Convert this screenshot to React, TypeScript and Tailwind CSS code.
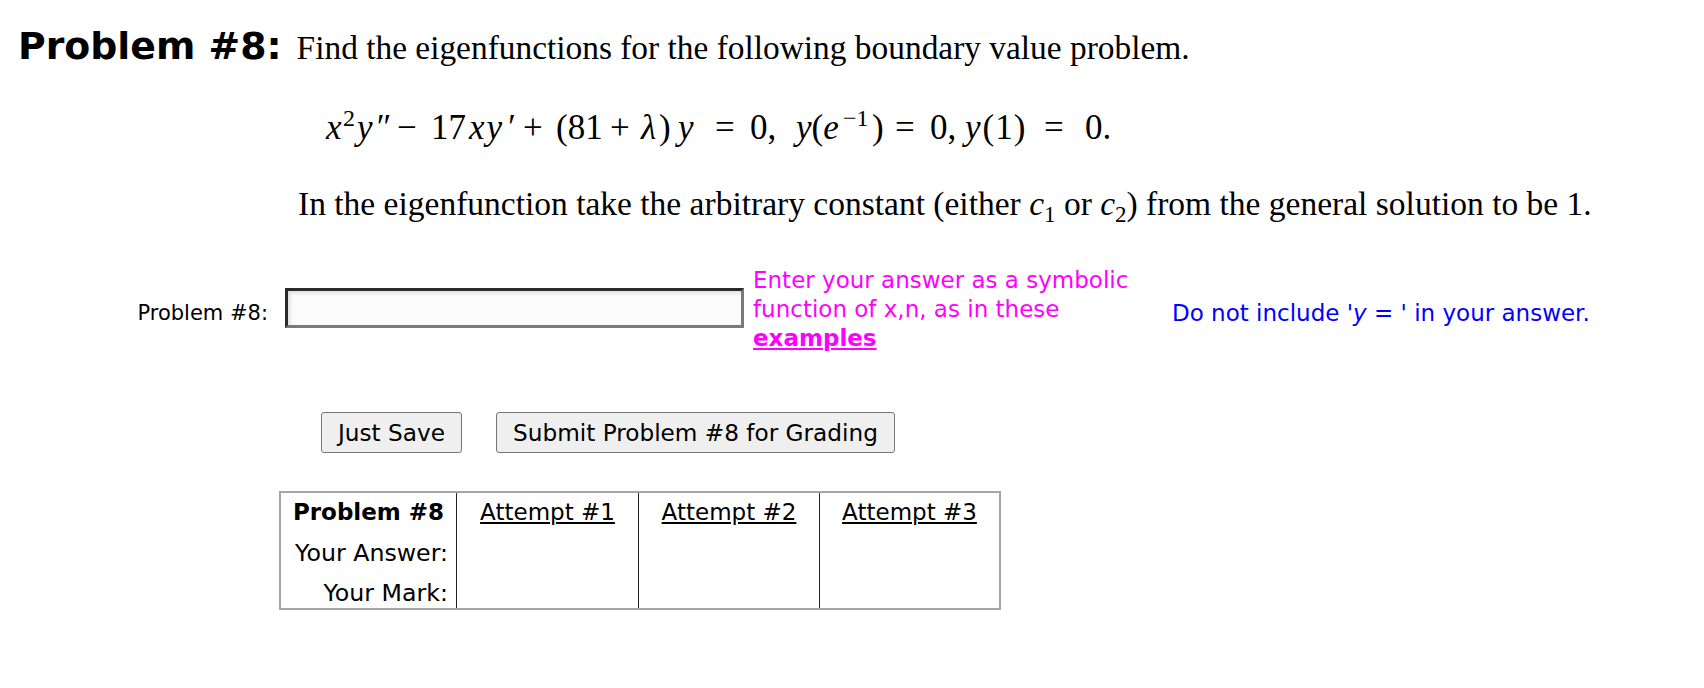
import React from "react";

const serif = "font-['Liberation_Serif',_'Times_New_Roman',_serif]";
const sans = "font-['DejaVu_Sans',_Verdana,_sans-serif]";

function I({ children }: { children: React.ReactNode }) {
  return <span className="italic">{children}</span>;
}

export default function App() {
  return (
    <div className="w-[1704px] h-[688px] bg-white text-black overflow-hidden">
      {/* Title */}
      <div className="flex items-baseline pl-[18px] pt-[24px]">
        <span className={`${sans} font-bold text-[37.8px] leading-[44px]`}>Problem #8:</span>
        <span className={`${serif} text-[33.4px] leading-[44px] ml-[15px]`}>
          Find the eigenfunctions for the following boundary value problem.
        </span>
      </div>

      {/* Equation */}
      <div className={`${serif} text-[35px] leading-[40px] pl-[326px] mt-[38px] whitespace-nowrap flex items-baseline`}>
        <span className="w-[17px] shrink-0"><I>x</I></span>
        <span className="w-[14px] shrink-0 relative top-[-13px] text-[24px] leading-none">2</span>
        <span className="w-[40px] shrink-0"><I>y<span className="ml-[2px]">″</span></I></span>
        <span className="w-[34px] shrink-0">−</span>
        <span className="w-[92px] shrink-0">
          17<I><span className="ml-[3px]">x</span><span className="ml-[2px]">y</span><span className="ml-[4px]">′</span></I>
        </span>
        <span className="w-[33px] shrink-0">+</span>
        <span className="w-[54px] shrink-0">(81</span>
        <span className="w-[31px] shrink-0">+</span>
        <span className="w-[18px] shrink-0"><I>λ</I></span>
        <span className="w-[19px] shrink-0">)</span>
        <span className="w-[37px] shrink-0"><I>y</I></span>
        <span className="w-[35px] shrink-0">=</span>
        <span className="w-[46px] shrink-0">0,</span>
        <span className="w-[47px] shrink-0"><I>y</I>(<I>e</I></span>
        <span className="w-[29px] shrink-0 relative top-[-13px] text-[24px] leading-none">−1</span>
        <span className="w-[23px] shrink-0">)</span>
        <span className="w-[35px] shrink-0">=</span>
        <span className="w-[35px] shrink-0">0,</span>
        <span className="w-[79px] shrink-0"><I>y</I><span className="ml-[2px] tracking-[1px]">(1)</span></span>
        <span className="w-[41px] shrink-0">=</span>
        <span className="shrink-0">0.</span>
      </div>

      {/* Instruction line */}
      <div className={`${serif} text-[33.5px] leading-[40px] pl-[298px] mt-[36px] whitespace-nowrap`}>
        In the eigenfunction take the arbitrary constant (either <I>c</I>
        <span className="relative top-[7px] text-[23px] leading-none">1</span> or <I>c</I>
        <span className="relative top-[7px] text-[23px] leading-none">2</span>) from the general solution to be 1.
      </div>

      {/* Answer row */}
      <div className={`${sans} flex items-center mt-[40px] h-[87px]`}>
        <div className="w-[268px] text-right text-[21px] leading-[29px] pt-[12px]">Problem #8:</div>
        <div className="ml-[17px] w-[459px] h-[40px] border-[3px] border-t-[#2b2b2b] border-l-[#2b2b2b] border-b-[#7a7a7a] border-r-[#7a7a7a] bg-[#fbfbfb] shadow-[inset_2px_2px_4px_rgba(0,0,0,0.12)]"></div>
        <div className="ml-[9px] w-[419px] pt-[3px] text-[23px] leading-[29px] text-[#ff00ff]">
          Enter your answer as a symbolic
          <br />
          function of x,n, as in these
          <br />
          <span className="font-bold underline">examples</span>
        </div>
        <div className="text-[23px] leading-[29px] pt-[12px] text-[#0000ff] whitespace-nowrap">
          Do not include '<span className="italic">y</span> = ' in your answer.
        </div>
      </div>

      {/* Buttons */}
      <div className={`${sans} flex mt-[61px] pl-[321px] gap-[34px]`}>
        <button className="h-[41px] px-[16px] text-[23.2px] leading-[27px] bg-[#efefef] border border-[#767676] rounded-[3px] text-black">
          Just Save
        </button>
        <button className="h-[41px] px-[16px] text-[23.2px] leading-[27px] bg-[#efefef] border border-[#767676] rounded-[3px] text-black">
          Submit Problem #8 for Grading
        </button>
      </div>

      {/* Attempts table */}
      <div className={`${sans} mt-[38px] ml-[279px] w-[722px] border-2 border-[#a5a5a5] text-[23px] leading-[27px]`}>
        <div className="grid grid-cols-[175px_182px_181px_180px]">
          <div className="flex flex-col">
            <div className="text-center font-bold pt-[6px] pb-[8px]">Problem #8</div>
            <div className="text-right text-[23.7px] pr-[8px] pt-[6px] pb-[6px]">Your Answer:</div>
            <div className="text-right text-[23.7px] pr-[8px] pt-[7px] pb-[1px]">Your Mark:</div>
          </div>
          <div className="border-l border-[#222] text-center pt-[6px]">
            <span className="underline">Attempt #1</span>
          </div>
          <div className="border-l border-[#222] text-center pt-[6px]">
            <span className="underline">Attempt #2</span>
          </div>
          <div className="border-l border-[#222] text-center pt-[6px]">
            <span className="underline">Attempt #3</span>
          </div>
        </div>
      </div>
    </div>
  );
}
